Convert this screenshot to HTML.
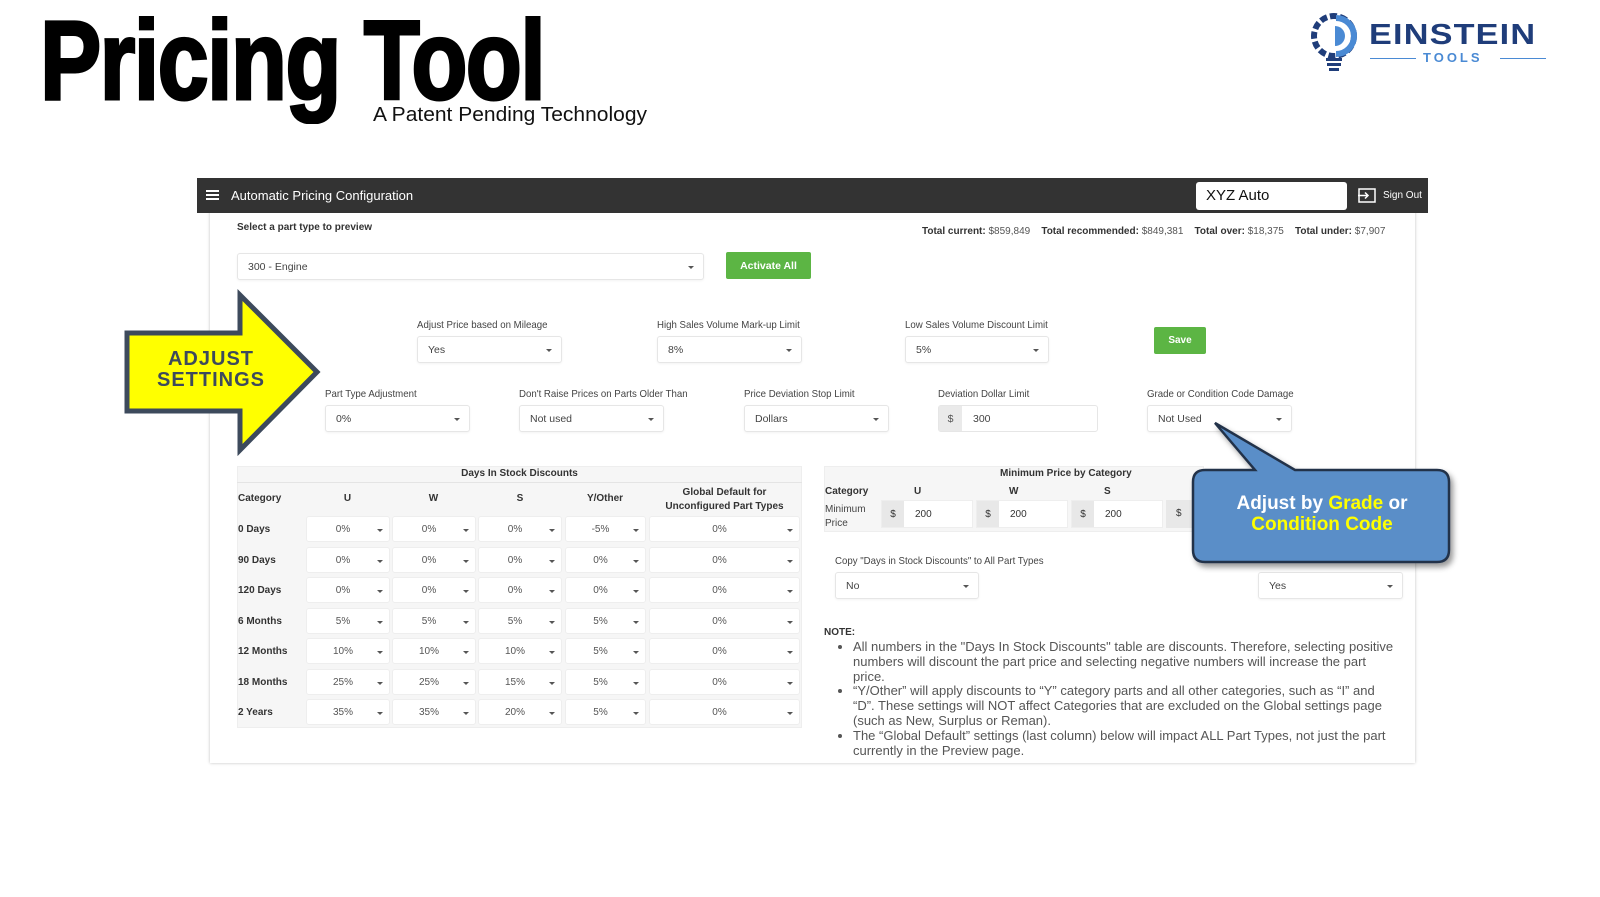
<!DOCTYPE html>
<html><head><meta charset="utf-8"><style>
*{margin:0;padding:0;box-sizing:border-box}
body{width:1600px;height:897px;background:#fff;position:relative;overflow:hidden;font-family:"Liberation Sans",sans-serif;color:#333}
.a{position:absolute}
.lbl{position:absolute;font-size:10.5px;color:#444;white-space:nowrap;transform:scaleX(.92);transform-origin:left}
.sel{position:absolute;height:27px;border:1px solid #e6e6e6;border-radius:3px;background:#fff;font-size:10.5px;color:#444;padding:7px 10px;box-shadow:0 1px 2px rgba(0,0,0,.05)}
.sel:after{content:"";position:absolute;right:9px;top:12px;border-left:3px solid transparent;border-right:3px solid transparent;border-top:3px solid #555}
.t{position:absolute;font-size:10px;white-space:nowrap}
.cell{position:absolute;height:26px;border:1px solid #eee;border-radius:3px;background:#fff;font-size:10px;color:#555;text-align:center;padding-top:7px;padding-right:10px}
.cell:after{content:"";position:absolute;right:6px;top:12px;border-left:3px solid transparent;border-right:3px solid transparent;border-top:3px solid #555}
.b{font-weight:bold;color:#333}
</style></head><body>

<div class="a" style="left:40px;top:-4px;font-size:112px;font-weight:bold;letter-spacing:-2px;transform:scaleX(.82);transform-origin:left;color:#000;line-height:130px;-webkit-text-stroke:3px #000">Pricing Tool</div>
<div class="a" style="left:373px;top:104px;font-size:20px;color:#111;transform:scaleX(1.05);transform-origin:left">A Patent Pending Technology</div>

<!-- logo -->
<svg class="a" style="left:1308px;top:8px" width="56" height="68" viewBox="0 0 56 68">
<circle cx="26" cy="28" r="20" fill="none" stroke="#1f3d7a" stroke-width="6" stroke-dasharray="7 3"/>
<path d="M28 10 A18 18 0 0 1 28 46" fill="none" stroke="#4a8ad4" stroke-width="6"/>
<path d="M27 18 A10 10 0 0 1 27 38 Z" fill="#4a8ad4"/>
<rect x="18" y="50" width="16" height="3" fill="#1f3d7a"/><rect x="19" y="55" width="14" height="3" fill="#1f3d7a"/><rect x="21" y="60" width="10" height="3" fill="#1f3d7a"/>
</svg>
<div class="a" style="left:1369px;top:19px;font-size:29px;font-weight:bold;color:#1f3d7a;letter-spacing:1px;transform:scaleX(1.18);transform-origin:left">EINSTEIN</div>
<div class="a" style="left:1370px;top:58px;width:46px;height:1px;background:#4a8ad4"></div>
<div class="a" style="left:1423px;top:50px;font-size:13px;font-weight:bold;color:#4a8ad4;letter-spacing:3px">TOOLS</div>
<div class="a" style="left:1500px;top:58px;width:46px;height:1px;background:#4a8ad4"></div>

<!-- card -->
<div class="a" style="left:210px;top:210px;width:1205px;height:553px;background:#fff;box-shadow:0 0 3px rgba(0,0,0,.25)"></div>
<div class="a" style="left:197px;top:178px;width:1231px;height:35px;background:#333"></div>
<div class="a" style="left:206px;top:190px;width:13px;height:2px;background:#fff;box-shadow:0 4px 0 #fff,0 8px 0 #fff"></div>
<div class="a" style="left:231px;top:188px;font-size:13px;color:#fff">Automatic Pricing Configuration</div>
<div class="a" style="left:1196px;top:182px;width:151px;height:28px;background:#fff;border-radius:3px;font-size:15px;color:#111;padding:5px 10px">XYZ Auto</div>
<svg class="a" style="left:1358px;top:188px" width="18" height="15" viewBox="0 0 18 15"><rect x="1" y="1" width="16" height="13" fill="none" stroke="#fff" stroke-width="1.5"/><path d="M0 7.5h10M7 4.5l3 3-3 3" stroke="#fff" stroke-width="1.5" fill="none"/></svg>
<div class="a" style="left:1383px;top:190px;font-size:10px;color:#fff">Sign Out</div>

<div class="t b" style="left:237px;top:222px">Select a part type to preview</div>
<div class="t" style="left:922px;top:226px;color:#555"><b style="color:#333">Total current:</b> $859,849 &nbsp; &nbsp;<b style="color:#333">Total recommended:</b> $849,381 &nbsp; &nbsp;<b style="color:#333">Total over:</b> $18,375 &nbsp; &nbsp;<b style="color:#333">Total under:</b> $7,907</div>
<div class="sel" style="left:237px;top:253px;width:467px">300 - Engine</div>
<div class="a" style="left:726px;top:252px;width:85px;height:27px;background:#5cb544;border-radius:2px;color:#fff;font-size:10.5px;font-weight:bold;text-align:center;padding-top:8px">Activate All</div>

<div class="lbl" style="left:417px;top:319px">Adjust Price based on Mileage</div>
<div class="sel" style="left:417px;top:336px;width:145px">Yes</div>
<div class="lbl" style="left:657px;top:319px">High Sales Volume Mark-up Limit</div>
<div class="sel" style="left:657px;top:336px;width:145px">8%</div>
<div class="lbl" style="left:905px;top:319px">Low Sales Volume Discount Limit</div>
<div class="sel" style="left:905px;top:336px;width:144px">5%</div>
<div class="a" style="left:1154px;top:327px;width:52px;height:27px;background:#5cb544;border-radius:2px;color:#fff;font-size:10px;font-weight:bold;text-align:center;padding-top:8px">Save</div>

<div class="lbl" style="left:325px;top:388px">Part Type Adjustment</div>
<div class="sel" style="left:325px;top:405px;width:145px">0%</div>
<div class="lbl" style="left:519px;top:388px">Don't Raise Prices on Parts Older Than</div>
<div class="sel" style="left:519px;top:405px;width:145px">Not used</div>
<div class="lbl" style="left:744px;top:388px">Price Deviation Stop Limit</div>
<div class="sel" style="left:744px;top:405px;width:145px">Dollars</div>
<div class="lbl" style="left:938px;top:388px">Deviation Dollar Limit</div>
<div class="a" style="left:938px;top:405px;width:160px;height:27px;border:1px solid #e6e6e6;border-radius:3px;background:#fff;font-size:10.5px"><div style="position:absolute;left:0;top:0;width:23px;height:25px;background:#eaeaea;text-align:center;padding-top:7px;color:#555">$</div><div style="position:absolute;left:34px;top:7px;color:#444">300</div></div>
<div class="lbl" style="left:1147px;top:388px">Grade or Condition Code Damage</div>
<div class="sel" style="left:1147px;top:405px;width:145px">Not Used</div>

<!-- left table -->
<div class="a" style="left:237px;top:466px;width:565px;height:262px;border:1px solid #eee;background:#f6f6f6"></div>
<div class="t b" style="left:237px;top:468px;width:565px;text-align:center">Days In Stock Discounts</div>
<div class="a" style="left:237px;top:482px;width:565px;height:1px;background:#e4e4e4"></div>
<div class="t b" style="left:238px;top:493px">Category</div>
<div class="t b" style="left:305px;top:493px;width:85px;text-align:center">U</div>
<div class="t b" style="left:390px;top:493px;width:87px;text-align:center">W</div>
<div class="t b" style="left:477px;top:493px;width:86px;text-align:center">S</div>
<div class="t b" style="left:563px;top:493px;width:84px;text-align:center">Y/Other</div>
<div class="t b" style="left:647px;top:486px;width:155px;text-align:center;line-height:14px">Global Default for<br>Unconfigured Part Types</div>

<div id="rows"></div>

<!-- right table -->
<div class="a" style="left:824px;top:466px;width:380px;height:66px;border:1px solid #eee;background:#f6f6f6"></div>
<div class="t b" style="left:1000px;top:468px">Minimum Price by Category</div>
<div class="t b" style="left:825px;top:486px">Category</div>
<div class="t b" style="left:914px;top:486px">U</div>
<div class="t b" style="left:1009px;top:486px">W</div>
<div class="t b" style="left:1104px;top:486px">S</div>
<div class="t" style="left:825px;top:503px;line-height:14px;color:#444">Minimum<br>Price</div>
<div class="a" style="left:881px;top:500px;width:92px;height:28px;background:#fff;border:1px solid #eee"><div style="position:absolute;left:0;top:0;width:22px;height:26px;background:#e8e8e8;font-size:10px;text-align:center;padding-top:8px">$</div><div class="t" style="left:33px;top:8px">200</div></div>
<div class="a" style="left:976px;top:500px;width:92px;height:28px;background:#fff;border:1px solid #eee"><div style="position:absolute;left:0;top:0;width:22px;height:26px;background:#e8e8e8;font-size:10px;text-align:center;padding-top:8px">$</div><div class="t" style="left:33px;top:8px">200</div></div>
<div class="a" style="left:1071px;top:500px;width:92px;height:28px;background:#fff;border:1px solid #eee"><div style="position:absolute;left:0;top:0;width:22px;height:26px;background:#e8e8e8;font-size:10px;text-align:center;padding-top:8px">$</div><div class="t" style="left:33px;top:8px">200</div></div>
<div class="a" style="left:1166px;top:500px;width:40px;height:28px;background:#e8e8e8;font-size:10px;padding:8px 0 0 10px">$</div>

<div class="lbl" style="left:835px;top:555px">Copy "Days in Stock Discounts" to All Part Types</div>
<div class="sel" style="left:835px;top:572px;width:144px">No</div>
<div class="sel" style="left:1258px;top:572px;width:145px">Yes</div>

<div class="t b" style="left:824px;top:627px">NOTE:</div>
<ul class="a" style="left:853px;top:640px;width:545px;font-size:13px;color:#555;line-height:14.8px;list-style:disc">
<li>All numbers in the "Days In Stock Discounts" table are discounts. Therefore, selecting positive numbers will discount the part price and selecting negative numbers will increase the part price.</li>
<li>“Y/Other” will apply discounts to “Y” category parts and all other categories, such as “I” and “D”. These settings will NOT affect Categories that are excluded on the Global settings page (such as New, Surplus or Reman).</li>
<li>The “Global Default” settings (last column) below will impact ALL Part Types, not just the part currently in the Preview page.</li>
</ul>

<!-- arrow -->
<svg class="a" style="left:120px;top:288px" width="210" height="172" viewBox="0 0 210 172">
<polygon points="7,45 120,45 120,7 197,84 120,162 120,123 7,123" fill="#ffff00" stroke="#3d4a5c" stroke-width="5" stroke-linejoin="miter"/>
</svg>
<div class="a" style="left:128px;top:349px;width:166px;text-align:center;font-size:20px;font-weight:bold;color:#3d4a5c;line-height:21px;letter-spacing:1px">ADJUST<br>SETTINGS</div>

<!-- callout -->
<svg class="a" style="left:1185px;top:418px" width="275" height="155" viewBox="0 0 275 155">
<defs><filter id="s"><feDropShadow dx="3" dy="4" stdDeviation="3" flood-opacity=".4"/></filter></defs>
<path d="M20 52 H70 L30 5 L110 52 H252 Q264 52 264 64 V132 Q264 144 252 144 H20 Q8 144 8 132 V64 Q8 52 20 52 Z" fill="#5a8ec8" stroke="#22324a" stroke-width="2.5" filter="url(#s)"/>
</svg>
<div class="a" style="left:1193px;top:493px;width:258px;text-align:center;font-size:19px;font-weight:bold;color:#fff;line-height:21px">Adjust by <span style="color:#ffff00">Grade</span> or<br><span style="color:#ffff00">Condition Code</span></div>

<script>
var rows=[["0 Days","0%","0%","0%","-5%"],["90 Days","0%","0%","0%","0%"],["120 Days","0%","0%","0%","0%"],["6 Months","5%","5%","5%","5%"],["12 Months","10%","10%","10%","5%"],["18 Months","25%","25%","15%","5%"],["2 Years","35%","35%","20%","5%"]];
var xs=[[306,84],[392,84],[478,84],[565,81],[649,151]],h="";
rows.forEach(function(r,i){var y=516+i*30.5;h+='<div class="t b" style="left:238px;top:'+(y+8)+'px">'+r[0]+'</div>';
for(var j=0;j<5;j++){h+='<div class="cell" style="left:'+xs[j][0]+'px;top:'+y+'px;width:'+xs[j][1]+'px">'+(j<4?r[j+1]:"0%")+'</div>';}});
document.getElementById("rows").innerHTML=h;
</script>
</body></html>
